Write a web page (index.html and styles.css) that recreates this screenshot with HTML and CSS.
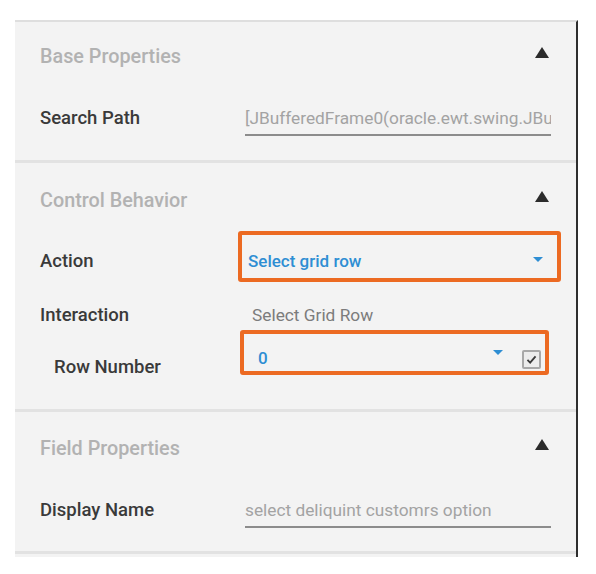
FILE: index.html
```html
<!DOCTYPE html>
<html lang="en">
<head>
  <meta charset="UTF-8" />
  <title>Properties</title>
  <link rel="stylesheet" href="styles.css">
</head>
<body>
  <div class="panel">

    <div class="section first">
      <div class="section-head">
        <span>Base Properties</span>
        <svg class="toggle" viewBox="0 0 14 11"><polygon points="7,0 14,11 0,11" /></svg>
      </div>
      <div class="row field-row">
        <label class="label">Search Path</label>
        <div class="text-input">[JBufferedFrame0(oracle.ewt.swing.JBufferedFrame)]</div>
      </div>
    </div>

    <div class="section second">
      <div class="section-head">
        <span>Control Behavior</span>
        <svg class="toggle" viewBox="0 0 14 11"><polygon points="7,0 14,11 0,11" /></svg>
      </div>
      <div class="row action-row">
        <label class="label">Action</label>
        <div class="select highlight action-select">
          <span>Select grid row</span>
          <svg class="caret" viewBox="0 0 10 5"><polygon points="0,0 10,0 5,5" /></svg>
        </div>
      </div>
      <div class="row interaction-row">
        <label class="label">Interaction</label>
        <div class="static-value">Select Grid Row</div>
      </div>
      <div class="row number-row">
        <label class="label sub">Row Number</label>
        <div class="select highlight number-select">
          <span>0</span>
          <svg class="caret" viewBox="0 0 10 5"><polygon points="0,0 10,0 5,5" /></svg>
          <span class="check">
            <svg viewBox="0 0 12 10"><polyline points="1.5,5.5 4.5,8.5 10.5,1.5" /></svg>
          </span>
        </div>
      </div>
    </div>

    <div class="section third">
      <div class="section-head">
        <span>Field Properties</span>
        <svg class="toggle" viewBox="0 0 14 11"><polygon points="7,0 14,11 0,11" /></svg>
      </div>
      <div class="row field-row">
        <label class="label">Display Name</label>
        <div class="text-input">select deliquint customrs option</div>
      </div>
    </div>

  </div>
</body>
</html>
```

FILE: styles.css
```css
body {
  margin: 0;
  background: #fff;
  font-family: Roboto, "Liberation Sans", sans-serif;
}
.panel {
  margin: 20px 0 0 15px;
  width: 561px;
  height: 535px;
  background: #f3f3f3;
  border-top: 2px solid #dedede;
  border-right: 2px solid #2e2e2e;
}
.section {
  padding-left: 25px;
  padding-right: 27px;
  border-bottom: 3px solid #e2e2e2;
}
.section.first { padding-top: 16px; padding-bottom: 22px; }
.section.second { padding-top: 19px; padding-bottom: 34px; }
.section.third { padding-top: 18px; padding-bottom: 21px; }

.section-head {
  height: 36px;
  display: flex;
  align-items: center;
  justify-content: space-between;
  font-size: 19.8px;
  font-weight: 500;
  color: #b2b2b2;
}
.toggle {
  width: 14px;
  height: 11px;
  margin-top: -8px;
  fill: #2b2b2b;
}

.row {
  display: flex;
  align-items: center;
}
.label {
  width: 198px;
  flex: none;
  font-size: 18.5px;
  font-weight: 500;
  color: #3a3a3a;
}
.label.sub {
  padding-left: 14px;
  width: 184px;
  align-self: flex-end;
  margin-bottom: -3px;
}

.field-row {
  height: 40px;
  margin-top: 24px;
}
.text-input {
  flex: none;
  margin-left: 7px;
  width: 306px;
  height: 34px;
  line-height: 32px;
  font-size: 17.3px;
  color: #a3a3a3;
  white-space: nowrap;
  overflow: hidden;
  border-bottom: 2px solid #8c8c8c;
  box-sizing: border-box;
  margin-top: 2px;
}

.highlight {
  flex: none;
  border: 4px solid #ec6a22;
  border-radius: 3px;
  box-sizing: border-box;
}
.select {
  display: flex;
  align-items: center;
  color: #2e8ed3;
  font-size: 17px;
  font-weight: 500;
}
.caret {
  width: 10px;
  height: 5px;
  fill: #2e8ed3;
}

.action-row {
  margin-top: 13px;
}
.action-row .label {
  margin-top: 9px;
}
.action-select {
  width: 323px;
  height: 51px;
  padding: 0 14px 0 6px;
  justify-content: space-between;
}
.action-select span { margin-top: 8px; }
.action-select .caret { margin-top: 6px; }

.interaction-row {
  height: 30px;
  margin-top: 18px;
}
.static-value {
  padding-left: 14px;
  font-size: 17.3px;
  color: #7c7c7c;
}

.number-row {
  height: 45px;
}
.number-select {
  margin-left: 2px;
  width: 309px;
  height: 45px;
  padding: 0 4px 0 14px;
}
.number-select span:first-child {
  flex: 1;
  margin-top: 10px;
}
.number-select .caret {
  margin-right: 19px;
}
.check {
  width: 19px;
  height: 19px;
  margin-top: 14px;
  border: 2px solid #a8a8a8;
  border-radius: 2px;
  background: #ececec;
  box-sizing: border-box;
  display: flex;
  align-items: center;
  justify-content: center;
}
.check svg {
  width: 11px;
  height: 9px;
  fill: none;
  stroke: #3a3a3a;
  stroke-width: 2;
}
```
